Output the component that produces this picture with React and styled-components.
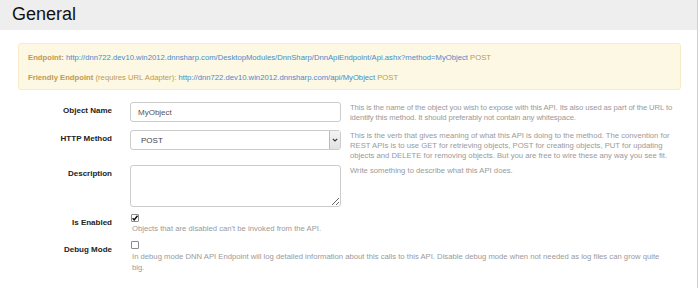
import React from 'react';
import styled, { createGlobalStyle } from 'styled-components';

const GlobalStyle = createGlobalStyle`
  html, body {
    margin: 0;
    padding: 0;
    background: #fff;
    font-family: "Liberation Sans", Arial, sans-serif;
  }
`;

const Page = styled.div`
  width: 698px;
  min-height: 288px;
  border-right: 1px solid #cfcfcf;
  box-sizing: border-box;
`;

const Header = styled.h2`
  margin: 0;
  height: 30px;
  line-height: 29px;
  padding-left: 12px;
  background: #eeeeee;
  font-size: 18px;
  font-weight: normal;
  color: #111;
`;

const Alert = styled.div`
  margin: 13px 16px 0 18px;
  padding: 9px 9px 6px;
  background: #fcf8e3;
  border: 1px solid #f8ecc8;
  border-radius: 3px;
  color: #c09853;
  font-size: 7.7px;
`;

const AlertLine = styled.div`
  line-height: 10px;
  & + & {
    margin-top: 10px;
  }
`;

const Strong = styled.b`
  font-weight: bold;
`;

const Link = styled.a`
  color: #4a8acd;
  text-decoration: none;
`;

const Form = styled.div`
  margin-top: 12px;
`;

const Row = styled.div`
  display: flex;
  align-items: flex-start;
  margin-bottom: ${(p) => p.gap || 6}px;
`;

const Label = styled.div`
  width: 112px;
  margin-right: 18px;
  text-align: right;
  font-size: 8px;
  font-weight: bold;
  color: #222;
  line-height: 18px;
  flex-shrink: 0;
`;

const TextInput = styled.input`
  width: 211px;
  height: 20px;
  box-sizing: border-box;
  border: 1px solid #ccc;
  border-radius: 3px;
  padding: 0 7px;
  font-family: inherit;
  font-size: 8px;
  color: #555;
  outline: none;
  flex-shrink: 0;
`;

const Select = styled.div`
  width: 211px;
  height: 20px;
  box-sizing: border-box;
  border: 1px solid #ccc;
  border-radius: 3px;
  display: flex;
  align-items: stretch;
  font-size: 8px;
  color: #444;
  flex-shrink: 0;
`;

const SelectValue = styled.div`
  flex: 1;
  padding-left: 10px;
  display: flex;
  align-items: center;
`;

const SelectArrow = styled.div`
  width: 10px;
  border-left: 1px solid #bbb;
  background: linear-gradient(#f4f4f4, #e2e2e2);
  display: flex;
  align-items: center;
  justify-content: center;
`;

const TextArea = styled.textarea`
  width: 211px;
  height: 42px;
  box-sizing: border-box;
  border: 1px solid #ccc;
  border-radius: 3px;
  font-family: inherit;
  font-size: 8px;
  resize: vertical;
  outline: none;
  margin: 0;
  display: block;
  flex-shrink: 0;
`;

const Help = styled.div`
  width: ${(p) => p.w || 345}px;
  flex-shrink: 0;
  margin-left: 9px;
  padding-top: 1px;
  font-size: 7.7px;
  letter-spacing: ${(p) => (p.tight ? '-0.1px' : 'normal')};
  line-height: 10px;
  color: #9a9a9a;
`;

const CheckField = styled.div`
  width: 532px;
`;

const Box = styled.span`
  display: block;
  width: 8px;
  height: 8px;
  border: 1px solid #8c8c8c;
  border-radius: 1px;
  background: #fff;
  margin-left: 1px;
  box-sizing: border-box;
`;

const CheckHelp = styled.div`
  margin-top: 2px;
  padding-left: 2px;
  font-size: 7.7px;
  line-height: ${(p) => p.lh || 10}px;
  color: #9a9a9a;
`;

const Checkbox = ({ checked }) => (
  <Box>
    {checked && (
      <svg width="8" height="8" viewBox="0 0 8 8" style={{ display: 'block', marginLeft: -1, marginTop: -1 }}>
        <path d="M1.6 4.2 L3.2 5.9 L6.5 1.7" fill="none" stroke="#111" strokeWidth="1.5" />
      </svg>
    )}
  </Box>
);

export default function App() {
  return (
    <Page>
      <GlobalStyle />
      <Header>General</Header>
      <Alert>
        <AlertLine>
          <Strong>Endpoint:</Strong>{' '}
          <Link href="#">http://dnn722.dev10.win2012.dnnsharp.com/DesktopModules/DnnSharp/DnnApiEndpoint/Api.ashx?method=MyObject</Link> POST
        </AlertLine>
        <AlertLine>
          <Strong>Friendly Endpoint</Strong> (requires URL Adapter):{' '}
          <Link href="#">http://dnn722.dev10.win2012.dnnsharp.com/api/MyObject</Link> POST
        </AlertLine>
      </Alert>
      <Form>
        <Row gap={7}>
          <Label>Object Name</Label>
          <TextInput defaultValue="MyObject" />
          <Help w={346} tight>
            This is the name of the object you wish to expose with this API. Its also used as part of the URL to
            identify this method. It should preferably not contain any whitespace.
          </Help>
        </Row>
        <Row gap={4}>
          <Label>HTTP Method</Label>
          <Select>
            <SelectValue>POST</SelectValue>
            <SelectArrow>
              <svg width="6" height="4" viewBox="0 0 6 4">
                <path d="M0.8 0.8 L3 3 L5.2 0.8" fill="none" stroke="#333" strokeWidth="1.1" />
              </svg>
            </SelectArrow>
          </Select>
          <Help w={335}>
            This is the verb that gives meaning of what this API is doing to the method. The convention for REST APIs
            is to use GET for retrieving objects, POST for creating objects, PUT for updating objects and DELETE for
            removing objects. But you are free to wire these any way you see fit.
          </Help>
        </Row>
        <Row gap={7}>
          <Label>Description</Label>
          <TextArea />
          <Help>Write something to describe what this API does.</Help>
        </Row>
        <Row gap={7}>
          <Label>Is Enabled</Label>
          <CheckField>
            <Checkbox checked />
            <CheckHelp>Objects that are disabled can't be invoked from the API.</CheckHelp>
          </CheckField>
        </Row>
        <Row>
          <Label>Debug Mode</Label>
          <CheckField>
            <Checkbox />
            <CheckHelp lh={11}>
              In debug mode DNN API Endpoint will log detailed information about this calls to this API. Disable debug
              mode when not needed as log files can grow quite big.
            </CheckHelp>
          </CheckField>
        </Row>
      </Form>
    </Page>
  );
}
